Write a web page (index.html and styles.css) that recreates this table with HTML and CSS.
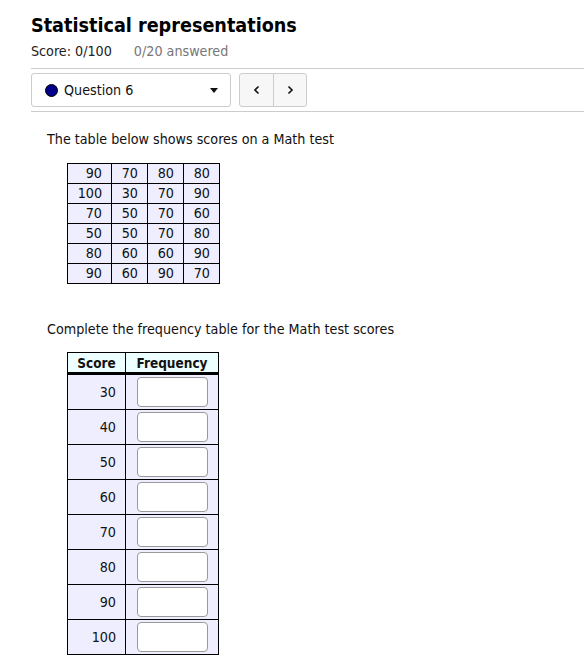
FILE: index.html
```html
<!DOCTYPE html>
<html>
<head>
<meta charset="utf-8">
<link rel="stylesheet" href="styles.css">
</head>
<body>
<div class="page">
  <h1 class="title">Statistical representations</h1>
  <div class="scoreline"><span class="score">Score: 0/100</span><span class="answered">0/20 answered</span></div>
  <div class="navbar">
    <div class="qselect">
      <span class="dot"></span>
      <span class="qlabel">Question 6</span>
      <span class="caret"></span>
    </div>
    <div class="btngroup">
      <button class="navbtn"><svg width="8" height="10" viewBox="0 0 8 10"><path d="M5.5 1.5 L2 5 L5.5 8.5" fill="none" stroke="#111" stroke-width="1.6"/></svg></button>
      <button class="navbtn"><svg width="8" height="10" viewBox="0 0 8 10"><path d="M2.5 1.5 L6 5 L2.5 8.5" fill="none" stroke="#111" stroke-width="1.6"/></svg></button>
    </div>
  </div>
  <div class="question">
    <p class="prompt">The table below shows scores on a Math test</p>
    <table class="data">
      <colgroup><col class="c1"><col class="cn"><col class="cn"><col class="cn"></colgroup>
      <tr><td>90</td><td>70</td><td>80</td><td>80</td></tr>
      <tr><td>100</td><td>30</td><td>70</td><td>90</td></tr>
      <tr><td>70</td><td>50</td><td>70</td><td>60</td></tr>
      <tr><td>50</td><td>50</td><td>70</td><td>80</td></tr>
      <tr><td>80</td><td>60</td><td>60</td><td>90</td></tr>
      <tr><td>90</td><td>60</td><td>90</td><td>70</td></tr>
    </table>
    <p class="prompt second">Complete the frequency table for the Math test scores</p>
    <table class="freq">
      <colgroup><col class="fc1"><col class="fc2"></colgroup>
      <thead><tr><th>Score</th><th>Frequency</th></tr></thead>
      <tbody>
        <tr><td class="sc">30</td><td class="fi"><input type="text"></td></tr>
        <tr><td class="sc">40</td><td class="fi"><input type="text"></td></tr>
        <tr><td class="sc">50</td><td class="fi"><input type="text"></td></tr>
        <tr><td class="sc">60</td><td class="fi"><input type="text"></td></tr>
        <tr><td class="sc">70</td><td class="fi"><input type="text"></td></tr>
        <tr><td class="sc">80</td><td class="fi"><input type="text"></td></tr>
        <tr><td class="sc">90</td><td class="fi"><input type="text"></td></tr>
        <tr><td class="sc">100</td><td class="fi"><input type="text"></td></tr>
      </tbody>
    </table>
  </div>
</div>
</body>
</html>
```
FILE: styles.css
```css
html, body { margin: 0; padding: 0; background: #fff; }
body { font-family: "DejaVu Sans Condensed", "DejaVu Sans", sans-serif; color: #111; font-size: 14.2px; }
.page { padding: 12px 0 0 31px; }
.title { font-size: 19.6px; font-weight: bold; margin: 0; line-height: 28px; color: #000; }
.scoreline { margin-top: 2px; line-height: 18px; }
.score { color: #222; }
.answered { color: #777; margin-left: 22px; }
.navbar { margin-top: 8px; border-top: 1px solid #ccc; border-bottom: 1px solid #ccc; padding: 4px 0; display: flex; gap: 8px; }
.qselect { height: 32px; border: 1px solid #ccc; border-radius: 3px; display: flex; align-items: center; padding: 0 12px 0 13px; width: 173px; }
.dot { width: 13px; height: 13px; border-radius: 50%; background: #00008b; border: 1px solid #000; box-sizing: border-box; margin-right: 6px; }
.qlabel { flex: 1; color: #111; }
.caret { width: 0; height: 0; border-left: 4px solid transparent; border-right: 4px solid transparent; border-top: 5px solid #111; }
.btngroup { display: flex; border: 1px solid #ccc; border-radius: 3px; background: #f7f7f7; height: 32px; }
.navbtn { width: 33px; height: 32px; border: 0; background: transparent; padding: 0; display: flex; align-items: center; justify-content: center; }
.navbtn + .navbtn { border-left: 1px solid #ccc; }
.question { padding-left: 16px; }
.prompt { margin: 18px 0 0; line-height: 18px; }
.prompt.second { margin-top: 36px; }
.data { border-collapse: collapse; table-layout: fixed; margin: 15px 0 0 20px; background: #eeeeff; width: 153px; }
.c1 { width: 44px; }
.cn { width: 36px; }
.data td { border: 1px solid #000; height: 19px; padding: 0 9px 0 0; text-align: right; line-height: 19px; }
.freq { border-collapse: collapse; table-layout: fixed; margin: 14px 0 0 20px; width: 151px; }
.fc1 { width: 58px; }
.fc2 { width: 93px; }
.freq th { border: 1px solid #000; border-bottom: 3px solid #000; background: #eeffff; font-weight: bold; font-size: 13.5px; height: 19px; padding: 0; line-height: 18px; }
.freq td { border: 1px solid #000; height: 34px; background: #eeeeff; padding: 0; }
.freq td.sc { text-align: right; padding-right: 9px; }
.freq td.fi { text-align: center; }
.freq input { width: 71px; height: 30px; box-sizing: border-box; border: 1px solid #999; border-radius: 4px; background: #fff; display: block; margin: 0 auto; }
```
